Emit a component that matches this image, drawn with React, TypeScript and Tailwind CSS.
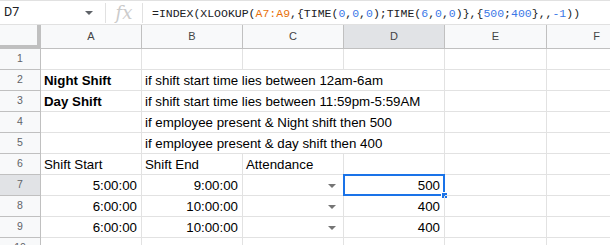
import React from "react";

const cols = ["A", "B", "C", "D", "E", "F"];
const widths = ["w-[101px]", "w-[101px]", "w-[101px]", "w-[101px]", "w-[102px]", "w-[100px]"];

// span: text runs over the next cells, like a sheet does with overflow
type Cell = { text?: string; bold?: boolean; right?: boolean; drop?: boolean; sel?: boolean; span?: boolean };

const rows: Record<number, Record<number, Cell>> = {
  2: { 0: { text: "Night Shift", bold: true }, 1: { text: "if shift start time lies between 12am-6am", span: true } },
  3: { 0: { text: "Day Shift", bold: true }, 1: { text: "if shift start time lies between 11:59pm-5:59AM", span: true } },
  4: { 1: { text: "if employee present & Night shift then 500", span: true } },
  5: { 1: { text: "if employee present & day shift then 400", span: true } },
  6: { 0: { text: "Shift Start" }, 1: { text: "Shift End" }, 2: { text: "Attendance" } },
  7: {
    0: { text: "5:00:00", right: true },
    1: { text: "9:00:00", right: true },
    2: { drop: true },
    3: { text: "500", right: true, sel: true },
  },
  8: {
    0: { text: "6:00:00", right: true },
    1: { text: "10:00:00", right: true },
    2: { drop: true },
    3: { text: "400", right: true },
  },
  9: {
    0: { text: "6:00:00", right: true },
    1: { text: "10:00:00", right: true },
    2: { drop: true },
    3: { text: "400", right: true },
  },
};

function Formula() {
  const num = "text-[#3b78e7]";
  const ref = "text-[#e8710a]";
  return (
    <span className="whitespace-nowrap font-['Liberation_Mono',monospace] text-[11.5px] text-[#202124]">
      =INDEX(XLOOKUP(<span className={ref}>A7:A9</span>,{"{"}TIME(<span className={num}>0</span>,
      <span className={num}>0</span>,<span className={num}>0</span>);TIME(<span className={num}>6</span>,
      <span className={num}>0</span>,<span className={num}>0</span>){"}"},{"{"}
      <span className={num}>500</span>;<span className={num}>400</span>
      {"}"},,<span className={num}>-1</span>))
    </span>
  );
}

export default function App() {
  return (
    <div className="w-[610px] h-[245px] overflow-hidden bg-white font-['Liberation_Sans',Arial,sans-serif] text-[13.3px] text-black">
      {/* formula bar */}
      <div className="flex h-[25px] items-center border-t border-b border-[#e1e1e1]">
        <div className="flex w-[105px] items-center justify-between pl-[4px] pr-[12px] font-['Roboto',sans-serif] text-[12.5px] text-[#202124]">
          <span>D7</span>
          <span className="h-0 w-0 border-x-[4px] border-t-[4px] border-x-transparent border-t-[#5f6368]" />
        </div>
        <div className="flex h-[20px] w-[38px] items-center justify-center border-x border-[#e1e1e1] font-['DejaVu_Serif',serif] text-[18px] italic text-[#cbcbcb]">
          fx
        </div>
        <div className="pl-[9px]">
          <Formula />
        </div>
      </div>

      {/* column headers */}
      <div className="flex h-[24px]">
        <div className="w-[41px] shrink-0 border-r-[4px] border-b-[4px] border-[#c0c0c0] bg-[#f8f9fa]" />
        {cols.map((c, i) => (
          <div
            key={c}
            className={`${widths[i]} shrink-0 flex items-center justify-center border-r border-b border-[#c0c0c0] text-[11px] text-[#444] ${
              c === "D" ? "bg-[#e1e3e6]" : "bg-[#f8f9fa]"
            }`}
          >
            {c}
          </div>
        ))}
      </div>

      {/* rows */}
      {[1, 2, 3, 4, 5, 6, 7, 8, 9, 10].map((r) => {
        const spanRow = rows[r]?.[1]?.span;
        return (
          <div key={r} className="flex h-[21px]">
            <div
              className={`w-[41px] shrink-0 flex items-center justify-center border-r border-b border-[#c0c0c0] text-[10.5px] text-[#5f6368] ${
                r === 7 ? "bg-[#e1e3e6]" : "bg-[#f8f9fa]"
              }`}
            >
              {r}
            </div>
            {cols.map((c, i) => {
              if (spanRow && (i === 2 || i === 3)) return null;
              const cell = rows[r]?.[i];
              const w = spanRow && i === 1 ? "w-[303px]" : widths[i];
              return (
                <div
                  key={c}
                  className={`${w} shrink-0 relative flex items-end pb-[2px] border-r border-b border-[#e2e2e2] whitespace-nowrap ${
                    cell?.right ? "justify-end pr-[4px]" : "pl-[3px]"
                  } ${cell?.bold ? "font-bold" : ""}`}
                >
                  {cell?.text && <span className="leading-[15px]">{cell.text}</span>}
                  {cell?.drop && (
                    <span className="absolute right-[7px] top-[9px] h-0 w-0 border-x-[4px] border-t-[4px] border-x-transparent border-t-[#757575]" />
                  )}
                  {cell?.sel && (
                    <>
                      <span className="absolute -left-[1px] -top-[1px] -right-[1px] -bottom-[1px] border-2 border-[#1a73e8]" />
                      <span className="absolute -right-[4px] -bottom-[4px] h-[7px] w-[7px] border border-white bg-[#1a73e8]" />
                    </>
                  )}
                </div>
              );
            })}
          </div>
        );
      })}
    </div>
  );
}
